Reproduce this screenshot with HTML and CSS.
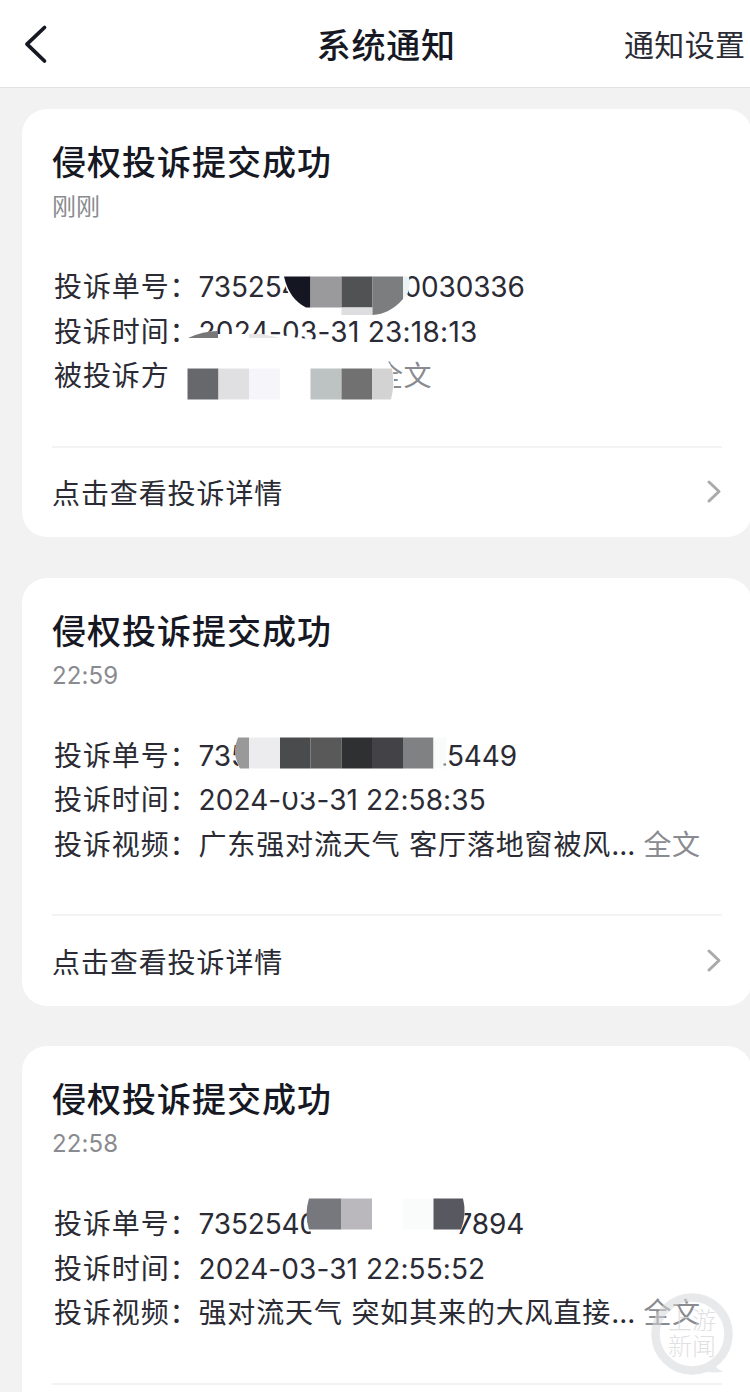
FILE: index.html
```html
<!DOCTYPE html>
<html lang="zh-CN">
<head>
<meta charset="utf-8">
<title>系统通知</title>
<link rel="stylesheet" href="styles.css">
</head>
<body>
<div class="page">
  <header class="bar">
    <svg class="back" width="24" height="40" viewBox="0 0 24 40"><path d="M20.5 3.500 3 20.200 20.500 37"/></svg>
    <h1 class="bar-title">系统通知</h1>
    <a class="bar-action">通知设置</a>
  </header>
  <main class="list">
    <article class="card">
      <h2 class="title">侵权投诉提交成功</h2>
      <div class="time">刚刚</div>
      <div class="rows">
        <div class="row"><span class="label">投诉单号：</span><span class="num id-head">735254</span><span class="num">0030336</span></div>
        <div class="row"><span class="label">投诉时间：</span><span class="num date date-a">2024-03-31 23:18:13</span></div>
        <div class="row"><span class="label party">被投诉方</span><span class="more">全文</span></div>
      </div>
      <div class="foot"><span>点击查看投诉详情</span><svg class="arrow" width="16" height="26" viewBox="0 0 16 26"><path d="M3 3 13 12.500 3 22"/></svg></div>
      <svg class="mosaic" width="728" height="428" viewBox="22 109 728 428">
        <path fill="#fff" d="M286 272H407Q412 290 403 303L396 307 380 316H341V308H306Q290 300 286 288Z"/>
        <path fill="#141721" d="M284 276.500H310.500V307.500H306Q289 299 284 276.500Z"/>
        <path fill="#9a999b" d="M310.500 276.500h31v31h-31z"/>
        <path fill="#515254" d="M341.500 276.500h31v31h-31z"/>
        <path fill="#dedddf" d="M341.500 307.500h31v7.500h-31z"/>
        <path fill="#7c7d7f" d="M372.500 276.500H403V299Q390 314 372.500 315Z"/>
        <path fill="#ecf1f3" d="M403 276.500H409Q412 290 403 299Z"/>
        <path fill="#fff" d="M188 338Q203 331 218 331V334H250L280 335 300 338 316 339.500V346H188Z"/>
        <path fill="#777779" d="M188 338Q203 331 218 331V338Z"/>
        <path fill="#e6e6e7" d="M249 334H262L280 338H249Z"/>
        <path fill="#fff" d="M371 360H387Q395 370 394 384Q394 394 389 400H371Z"/>
        <path fill="#67686c" d="M187.500 368.500h31v31h-31z"/>
        <path fill="#e0e0e2" d="M218.500 368.500h30.500v31h-30.500z"/>
        <path fill="#f6f6fa" d="M249 368.500h31v31h-31z"/>
        <path fill="#bdc3c3" d="M310.500 368.500h31v31h-31z"/>
        <path fill="#717171" d="M341.500 368.500h30.500v31h-30.500z"/>
        <path fill="#d3d3d4" d="M372 368.500H392Q395 384 391 399.500H372Z"/>
      </svg>
    </article>
    <article class="card">
      <h2 class="title">侵权投诉提交成功</h2>
      <div class="time num-time">22:59</div>
      <div class="rows">
        <div class="row"><span class="label">投诉单号：</span><span class="num id-head id-b">735</span><span class="num">5449</span></div>
        <div class="row"><span class="label">投诉时间：</span><span class="num date">2024-03-31 22:58:35</span></div>
        <div class="row"><span class="label">投诉视频：</span><span class="video">广东强对流天气 客厅落地窗被风<span class="dots">...</span></span><span class="more">全文</span></div>
      </div>
      <div class="foot"><span>点击查看投诉详情</span><svg class="arrow" width="16" height="26" viewBox="0 0 16 26"><path d="M3 3 13 12.500 3 22"/></svg></div>
      <svg class="mosaic" width="728" height="428" viewBox="22 578 728 428">
        <path fill="#fff" d="M238 737H446V769H240Q232 755 238 737Z"/>
        <path fill="#999" d="M238 737.500H249V768.500H240Q231 753 238 737.500Z"/>
        <path fill="#ececee" d="M249 737.500h31v31h-31z"/>
        <path fill="#4a4b4d" d="M280 737.500h30.500v31h-30.500z"/>
        <path fill="#59595a" d="M310.500 737.500h31v31h-31z"/>
        <path fill="#2f3032" d="M341.500 737.500h30.500v31h-30.500z"/>
        <path fill="#434246" d="M372 737.500h31v31h-31z"/>
        <path fill="#808183" d="M403 737.500h30.500v31h-30.500z"/>
        <path fill="#f9fbfb" d="M433.500 737.500h13v31h-13z"/>
        <path fill="#777" d="M443.500 763.500h2.500v2h-2.500z"/>
        <path fill="#fff" d="M280 786H316V792H280Z"/>
      </svg>
    </article>
    <article class="card">
      <h2 class="title">侵权投诉提交成功</h2>
      <div class="time num-time">22:58</div>
      <div class="rows">
        <div class="row"><span class="label">投诉单号：</span><span class="num id-head id-c">7352540</span><span class="num">7894</span></div>
        <div class="row"><span class="label">投诉时间：</span><span class="num date">2024-03-31 22:55:52</span></div>
        <div class="row"><span class="label">投诉视频：</span><span class="video">强对流天气 突如其来的大风直接<span class="dots">...</span></span><span class="more">全文</span></div>
      </div>
      <svg class="mosaic" width="728" height="346" viewBox="22 1046 728 346">
        <path fill="#fff" d="M309 1198H464Q467 1214 461 1229L455 1240H314Q303 1218 309 1198Z"/>
        <path fill="#77787d" d="M309 1198.500H341.500V1229.500H309Q304 1214 309 1198.500Z"/>
        <path fill="#bab8bd" d="M341.500 1198.500h30.500v31h-30.500z"/>
        <path fill="#fafcfc" d="M403 1198.500h30.500v31h-30.500z"/>
        <path fill="#585861" d="M433.500 1198.500H463Q467 1214 461 1229.500H433.500Z"/>
      </svg>
      <div class="foot"></div>
    </article>
  </main>
  <div class="mark">
    <svg class="mark-ring" width="84" height="84" viewBox="0 0 84 84"><circle cx="42" cy="42" r="36.500"/><path d="M56 79.500Q66 81.500 73 79.500Q67 77.500 65 73Z"/></svg>
    <div class="mark-text">上游<br>新闻</div>
  </div>
</div>
</body>
</html>
```
FILE: styles.css
```css
* { box-sizing: border-box; }
body {
  margin: 0;
  background: #f2f2f2;
  color: #2a2b34;
  font-family: Inter, "Noto Sans CJK SC", sans-serif;
}
.page {
  position: relative;
  width: 750px;
  height: 1392px;
  overflow: hidden;
}
.bar {
  display: grid;
  grid-template-columns: 1fr auto 1fr;
  align-items: center;
  height: 88px;
  padding: 0 4.500px 0 24px;
  background: #fff;
  border-bottom: 1px solid #e2e2e3;
}
.back { margin-top: 1px; }
.back path { fill: none; stroke: #161823; stroke-width: 3.8; stroke-linecap: round; stroke-linejoin: round; }
.bar-title {
  margin: 4px 0 0 3px;
  font-size: 34px;
  line-height: 50px;
  font-weight: 500;
  letter-spacing: 0.8px;
  color: #161823;
}
.bar-action { justify-self: end; margin-top: -2px; font-size: 30px; letter-spacing: 0.4px; white-space: nowrap; }
.list {
  display: flex;
  flex-direction: column;
  gap: 40.500px;
  padding: 21px 0 0 22px;
}
.card {
  position: relative;
  flex: none;
  width: 730px;
  height: 428px;
  padding: 32px 30px 0;
  background: #fff;
  border-radius: 25px;
}
.title {
  margin: 0;
  height: 44px;
  font-size: 34px;
  line-height: 44px;
  font-weight: 500;
  letter-spacing: 1px;
  color: #161823;
}
.time { height: 44px; font-size: 24px; line-height: 44px; color: #8a8b90; }
.num-time { letter-spacing: 0.1px; }
.rows { margin-top: 36px; padding-left: 2px; }
.row {
  display: flex;
  height: 44.700px;
  font-size: 28px;
  line-height: 44.700px;
  white-space: nowrap;
}
.label { flex: none; width: 144.500px; letter-spacing: 0.9px; }
.party { width: 321px; }
.num { letter-spacing: -0.15px; }
.date { letter-spacing: 0.1px; }
.date-a { letter-spacing: 0.25px; }
.id-head { width: 205px; }
.id-b { width: 248.500px; }
.id-c { width: 258px; }
.video { width: 445px; letter-spacing: 0.85px; }
.dots { letter-spacing: 0; }
.more { color: #8a8b90; letter-spacing: 0.5px; }
.foot {
  display: flex;
  align-items: center;
  justify-content: space-between;
  height: 91px;
  margin-top: 46.500px;
  border-top: 2px solid #f3f3f3;
  font-size: 28px;
  letter-spacing: 0.9px;
}
.card:last-child .foot { height: 10px; }
.arrow path { fill: none; stroke: #aaaaad; stroke-width: 3; stroke-linecap: round; stroke-linejoin: round; }
.mosaic { position: absolute; left: 0; top: 0; }
.mark { position: absolute; left: 650px; top: 1292px; width: 84px; height: 84px; }
.mark-ring { position: absolute; inset: 0; opacity: 0.55; }
.mark-ring circle { fill: none; stroke: #d7d8d9; stroke-width: 8.5; }
.mark-ring path { fill: #d7d8d9; }
.mark-text {
  position: relative;
  padding-top: 16px;
  text-align: center;
  font-size: 24px;
  line-height: 26px;
  font-weight: 300;
  color: rgba(216, 216, 218, 0.8);
}
```
